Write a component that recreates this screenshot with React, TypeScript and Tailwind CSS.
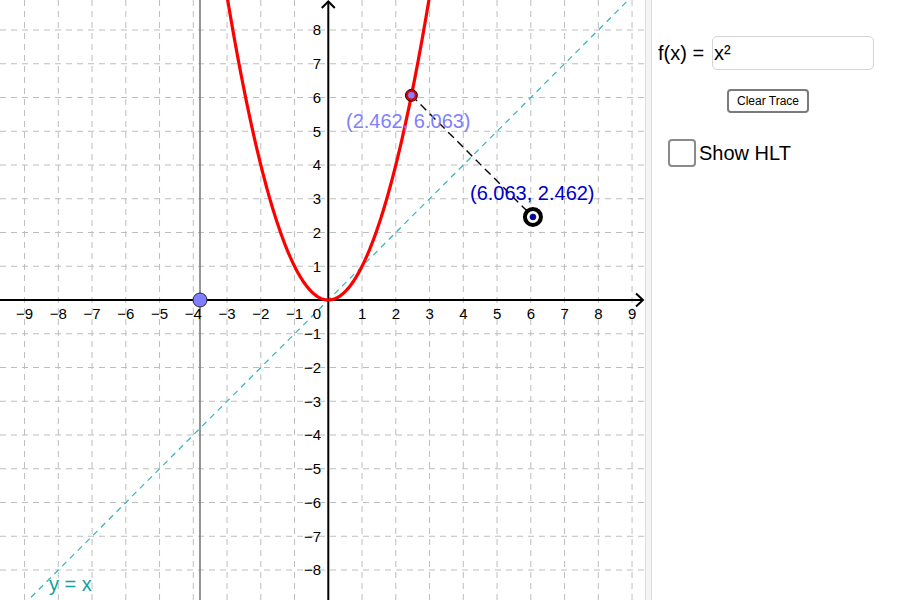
import React from "react";

const OX = 328.3;
const OY = 300;
const U = 33.75;
const sx = (x: number) => OX + x * U;
const sy = (y: number) => OY - y * U;

function Graph() {
  const xs: number[] = [];
  for (let i = -9; i <= 9; i++) if (i !== 0) xs.push(i);
  const ys: number[] = [];
  for (let j = -8; j <= 8; j++) if (j !== 0) ys.push(j);

  const pts: string[] = [];
  for (let t = -3.0; t <= 3.0001; t += 0.02) {
    pts.push(`${sx(t).toFixed(2)},${sy(t * t).toFixed(2)}`);
  }

  const ax = sx(2.462);
  const ay = sy(6.063);
  const bx = sx(6.063);
  const by = sy(2.462);

  const font = '"Liberation Sans", Arial, sans-serif';

  return (
    <svg width={645} height={600} viewBox="0 0 645 600" className="block shrink-0">
      <rect x={0} y={0} width={645} height={600} fill="#ffffff" />
      {xs.map((i) => (
        <line key={"gx" + i} x1={sx(i)} y1={0} x2={sx(i)} y2={600} stroke="#bdbdbd" strokeWidth={1} strokeDasharray="6 5" />
      ))}
      {ys.map((j) => (
        <line key={"gy" + j} x1={0} y1={sy(j)} x2={645} y2={sy(j)} stroke="#bdbdbd" strokeWidth={1} strokeDasharray="6 5" />
      ))}

      {/* y = x */}
      <line x1={sx(-9.5)} y1={sy(-9.5)} x2={sx(9.5)} y2={sy(9.5)} stroke="#2fb8b8" strokeWidth={1.2} strokeDasharray="6 5" />

      {/* vertical gray line */}
      <line x1={200} y1={0} x2={200} y2={600} stroke="#7a7a7a" strokeWidth={1.6} />

      {/* axes */}
      <line x1={0} y1={OY} x2={643} y2={OY} stroke="#000" strokeWidth={2} />
      <polyline points={`636,293.5 643,300 636,306.5`} fill="none" stroke="#000" strokeWidth={2} />
      <line x1={OX} y1={1} x2={OX} y2={600} stroke="#000" strokeWidth={2} />
      <polyline points={`${OX - 6.5},8 ${OX},1.5 ${OX + 6.5},8`} fill="none" stroke="#000" strokeWidth={2} />

      {/* tick labels */}
      <g fontFamily={font} fontSize={15} fill="#000">
        {xs.map((i) => (
          <text key={"lx" + i} x={sx(i)} y={318.5} textAnchor="middle">
            {i < 0 ? "\u2212" + -i : String(i)}
          </text>
        ))}
        <text x={321} y={318.5} textAnchor="end">0</text>
        {ys.map((j) => (
          <text key={"ly" + j} x={321} y={sy(j) + 5.3} textAnchor="end">
            {j < 0 ? "\u2212" + -j : String(j)}
          </text>
        ))}
      </g>

      {/* parabola */}
      <polyline points={pts.join(" ")} fill="none" stroke="#ff0000" strokeWidth={3.2} strokeLinejoin="round" />

      {/* dashed line A-B */}
      <line x1={ax} y1={ay} x2={bx} y2={by} stroke="#000" strokeWidth={1.4} strokeDasharray="8 5" />

      {/* point on x axis */}
      <circle cx={200} cy={300} r={7} fill="#7f7fff" stroke="#2a2a2a" strokeWidth={1} />

      {/* point A */}
      <circle cx={ax} cy={ay} r={6} fill="#e00000" stroke="#300000" strokeWidth={1} />
      <circle cx={ax} cy={ay} r={3.3} fill="#8080ff" />

      {/* point B */}
      <circle cx={bx} cy={by} r={8} fill="#ffffff" stroke="#000" strokeWidth={4} />
      <circle cx={bx} cy={by} r={3} fill="#0000b0" stroke="#000040" strokeWidth={0.6} />

      {/* labels */}
      <text x={346} y={128} fontFamily={font} fontSize={20} fill="#7f7fff">(2.462, 6.063)</text>
      <text x={470} y={200} fontFamily={font} fontSize={20} fill="#0000c8">(6.063, 2.462)</text>
      <text x={49} y={591} fontFamily={font} fontSize={20} fill="#12a0a0">y = x</text>
    </svg>
  );
}

export default function App() {
  return (
    <div
      className="flex h-[600px] w-[910px] overflow-hidden bg-white"
      style={{ fontFamily: '"Liberation Sans", Arial, sans-serif' }}
    >
      <Graph />
      <div className="h-full w-[7px] shrink-0 border-x border-[#dcdcdc] bg-[#f5f5f5]" />
      <div className="flex flex-1 flex-col">
        <div className="mt-[36px] flex items-center">
          <span className="ml-[6px] w-[54px] text-[20px] leading-none text-black">f(x) =</span>
          <div className="flex h-[34px] w-[162px] items-center rounded-[5px] border border-[#d4d4d4] bg-white pl-[1px] text-[20px] leading-none text-black">
            x²
          </div>
        </div>
        <div className="ml-[75px] mt-[19px] flex h-[24px] w-[82px] items-center justify-center rounded-[4px] border-2 border-[#7a7a7a] bg-white text-[12px] leading-none text-black">
          Clear Trace
        </div>
        <div className="ml-[16px] mt-[26px] flex items-center">
          <div className="h-[28px] w-[28px] rounded-[4px] border-2 border-[#8a8a8a] bg-white" />
          <span className="ml-[3px] text-[20px] leading-none text-black">Show HLT</span>
        </div>
      </div>
    </div>
  );
}
